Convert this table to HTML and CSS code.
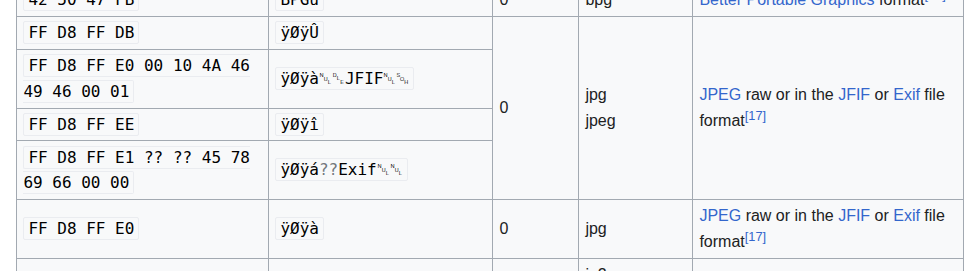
FILE: index.html
```html
<!DOCTYPE html>
<html lang="en">
<head>
<meta charset="utf-8">
<title>File signatures</title>
<link rel="stylesheet" href="styles.css">
</head>
<body>
<div class="page">
<table class="wikitable">
<colgroup><col class="c1"><col class="c2"><col class="c3"><col class="c4"><col class="c5"></colgroup>
<tr>
<td><code>42 50 47 FB</code></td>
<td><code>BPGû</code></td>
<td>0</td>
<td>bpg</td>
<td><a href="#">Better Portable Graphics</a> format<sup class="ref"><a href="#">[16]</a></sup></td>
</tr>
<tr>
<td><code>FF D8 FF DB</code></td>
<td><code>ÿØÿÛ</code></td>
<td rowspan="4">0</td>
<td rowspan="4">jpg<br>jpeg</td>
<td rowspan="4"><a href="#">JPEG</a> raw or in the <a href="#">JFIF</a> or <a href="#">Exif</a> file format<sup class="ref"><a href="#">[17]</a></sup></td>
</tr>
<tr>
<td><code>FF D8 FF E0 00 10 4A 46 49 46 00 01</code></td>
<td><code>ÿØÿà␀␐JFIF␀␁</code></td>
</tr>
<tr>
<td><code>FF D8 FF EE</code></td>
<td><code>ÿØÿî</code></td>
</tr>
<tr>
<td><code>FF D8 FF E1 ?? ?? 45 78 69 66 00 00</code></td>
<td><code>ÿØÿá<span class="any">??</span>Exif␀␀</code></td>
</tr>
<tr>
<td><code>FF D8 FF E0</code></td>
<td><code>ÿØÿà</code></td>
<td>0</td>
<td>jpg</td>
<td><a href="#">JPEG</a> raw or in the <a href="#">JFIF</a> or <a href="#">Exif</a> file format<sup class="ref"><a href="#">[17]</a></sup></td>
</tr>
<tr>
<td><code>00 00 00 0C 6A 50 20 20 0D 0A 87 0A</code></td>
<td><code>␀␀␀␌jP␠␠␍␊‡␊</code></td>
<td>0</td>
<td>jp2<br>j2k<br>jpf<br>jpm<br>jpg2<br>j2c<br>jpc<br>jpx<br>mj2</td>
<td><a href="#">JPEG 2000</a> format<sup class="ref"><a href="#">[18]</a></sup></td>
</tr>
</table>
</div>
</body>
</html>
```
FILE: styles.css
```css
html, body {
  margin: 0;
  padding: 0;
  background: #ffffff;
}

body {
  font-family: "Liberation Sans", Arial, sans-serif;
  font-size: 16px;
  line-height: 1.6;
  color: #202122;
}

.page {
  height: 271px;
  overflow: hidden;
  padding-left: 16px;
}

.wikitable {
  border-collapse: collapse;
  table-layout: fixed;
  width: 948px;
  margin-top: -17px;
  background: #f8f9fa;
  color: #202122;
}

.c1 { width: 252px; }
.c2 { width: 224px; }
.c3 { width: 86px; }
.c4 { width: 114px; }
.c5 { width: 271px; }

.wikitable td {
  border: 1px solid #a2a9b1;
  padding: 3.2px 6.4px;
  vertical-align: middle;
}

code {
  font-family: "DejaVu Sans Mono", monospace;
  font-size: 16px;
  color: #000000;
  background: #f8f9fa;
  border: 1px solid #eaecf0;
  border-radius: 2px;
  padding: 1px 4px;
}

.any {
  color: #72777d;
}

a {
  color: #3366cc;
  text-decoration: none;
}

.ref {
  font-size: 12.8px;
  line-height: 1;
  vertical-align: super;
}
```
